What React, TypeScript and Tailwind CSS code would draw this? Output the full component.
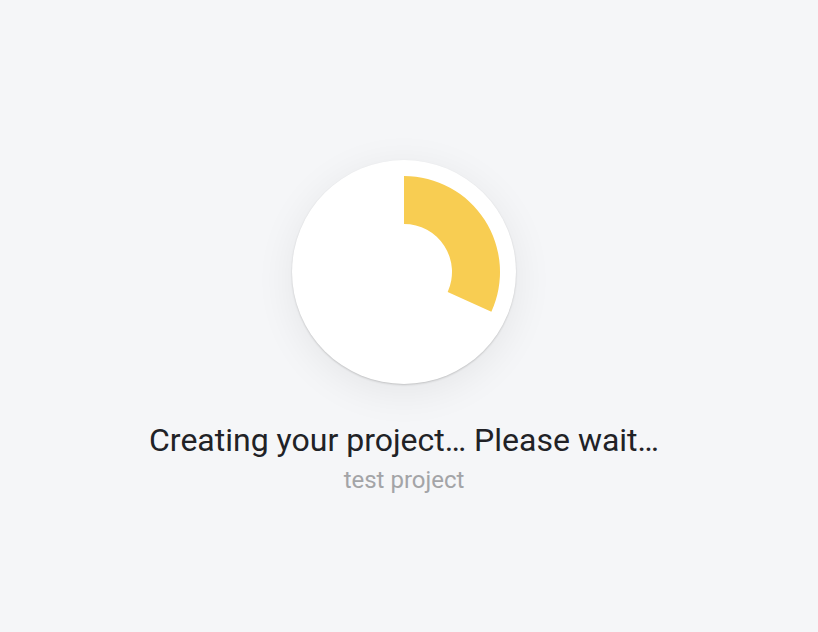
export default function App() {
  return (
    <div
      className="h-screen w-full bg-[#f5f6f8] flex flex-col items-center pt-[160px] pr-[10px]"
      style={{ fontFamily: 'Roboto, "Noto Sans", sans-serif' }}
    >
      {/* spinner disc */}
      <div className="w-[224px] h-[224px] rounded-full bg-white shadow-[0_1px_2px_rgba(0,0,0,0.18),0_8px_40px_rgba(0,0,0,0.07)]">
        <svg width="224" height="224" viewBox="0 0 224 224">
          <path
            d="M112 16 A96 96 0 0 1 199.36 151.8 L155.68 131.9 A48 48 0 0 0 112 64 Z"
            fill="#f8cd52"
          />
        </svg>
      </div>

      <h1 className="mt-[36px] text-[32px] leading-[40px] text-[#212226] font-normal whitespace-nowrap">
        Creating your project… Please wait…
      </h1>
      <p className="mt-[6px] text-[24px] leading-[28px] text-[#a3a4a7]">test project</p>
    </div>
  );
}
